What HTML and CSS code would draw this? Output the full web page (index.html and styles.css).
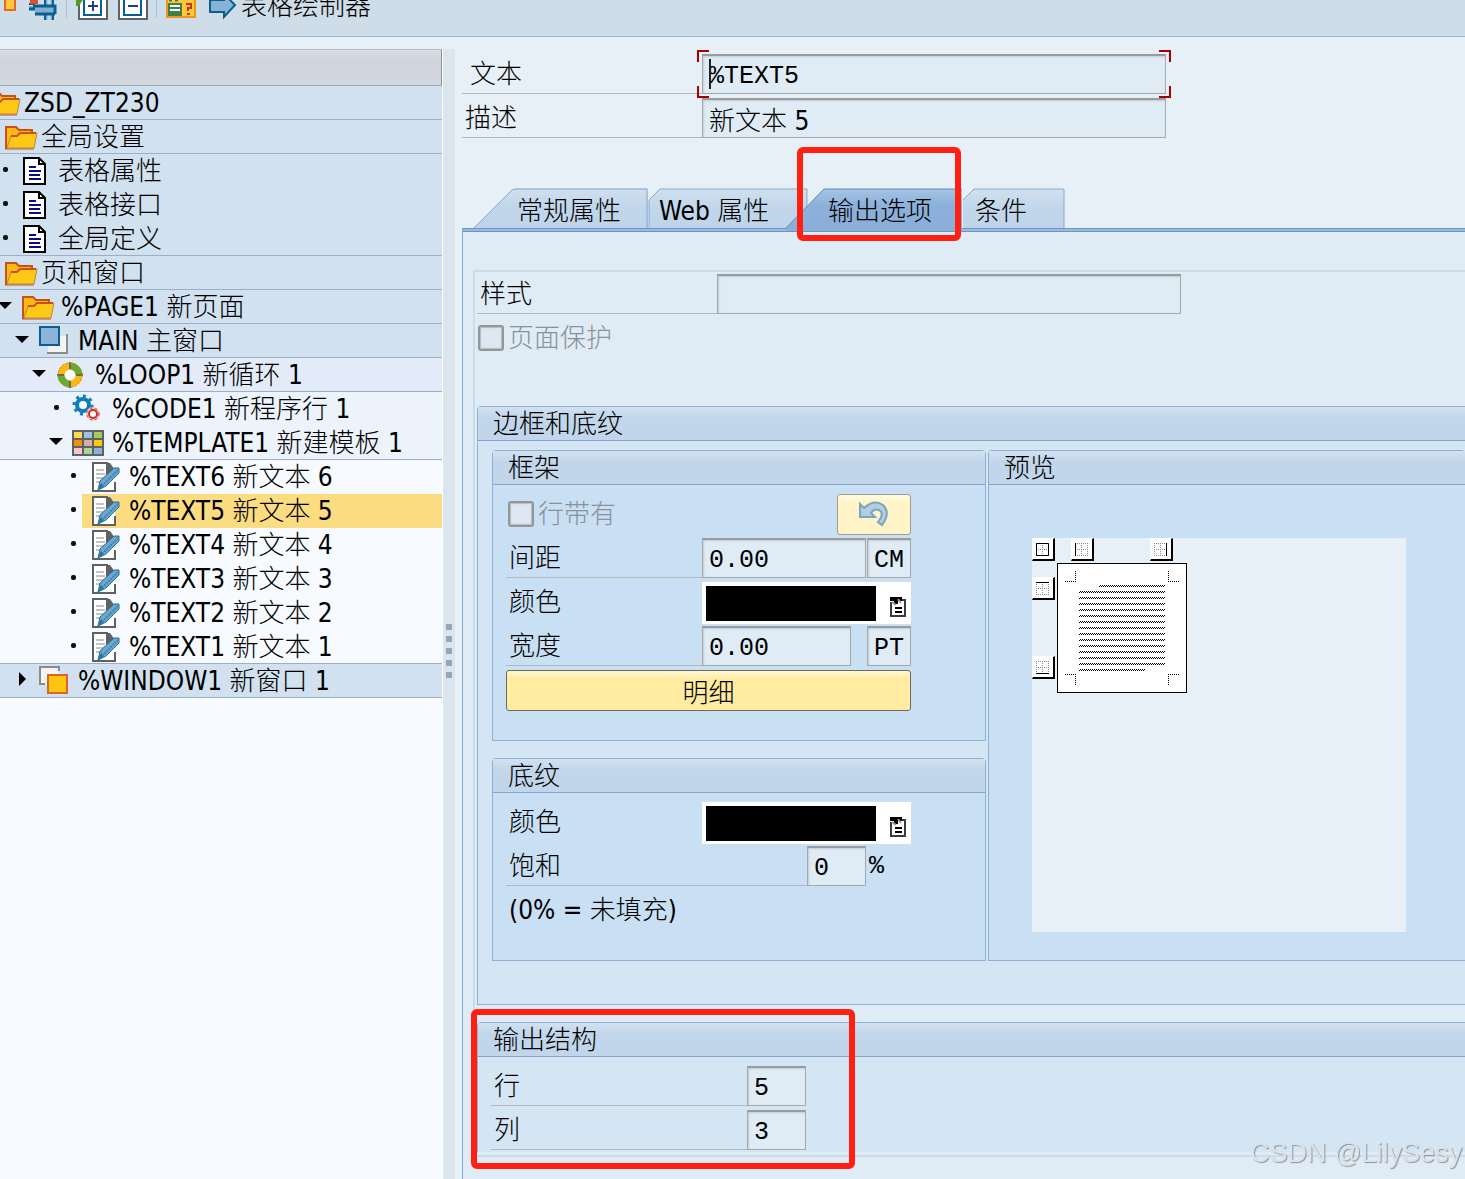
FILE: index.html
```html
<!DOCTYPE html>
<html lang="zh-CN">
<head>
	<meta charset="UTF-8">
	<title>表格绘制器</title>
	<link rel="stylesheet" href="styles.css">
</head>
<body>
	<!-- 图标 -->
	<svg class="defs" width="0" height="0">
		<symbol id="folder" viewBox="0 0 34 30">
			<path d="M2 27V5h10l3 3h13v5" fill="#fdb913" stroke="#c8501e" stroke-width="2"/>
			<path d="M3 26L7 14h6l3-3h17l-3 15z" fill="#fdc816" stroke="#b98a3a" stroke-width="1"/>
			<path d="M7 14h6l3-3h16" fill="none" stroke="#c8501e" stroke-width="2"/>
			<path d="M1 27h29" stroke="#c8501e" stroke-width="1"/>
		</symbol>
		<symbol id="doc" viewBox="0 0 34 30">
			<path d="M3 2h15l6 6v20H3z" fill="#fff" stroke="#000" stroke-width="2"/>
			<path d="M18 2v6h6" fill="none" stroke="#000" stroke-width="2"/>
			<path d="M8 11h7M8 15h12M8 19h11M8 23h12" stroke="#0a0a8c" stroke-width="2"/>
		</symbol>
		<symbol id="edit" viewBox="0 0 34 30">
			<path d="M4 1h14l8 8v20H4z" fill="#fff"/>
			<path d="M26 20v9H4V1h15" fill="none" stroke="#5f6163" stroke-width="2"/>
			<path d="M17 1h4l5 7-6 5h-3z" fill="#5f6163"/>
			<path d="M7 8h8M7 12h9M7 16h8M7 20h6" stroke="#c2c4c6" stroke-width="2"/>
			<path d="M9 28l2-9L25 6h5v5L17 24z" fill="#6fa6cc" stroke="#1f6f9f" stroke-width="1"/>
			<path d="M9 28l3-7 3 3z" fill="#1f6f9f"/>
			<path d="M13 24L29 8" stroke="#3d82b0" stroke-width="2" stroke-dasharray="2 1"/>
		</symbol>
		<symbol id="list" viewBox="0 0 18 22">
			<path d="M2 6v14h14V4h-3" fill="#fff" stroke="#3d3a3c" stroke-width="2"/>
			<path d="M1 1h12v4H9v3H5V5H1z" fill="#000"/>
			<path d="M9 3l3 4M3 6l4 3" stroke="#999" stroke-width="2"/>
			<path d="M6 12h7M6 16h7" stroke="#000" stroke-width="2"/>
		</symbol>
		<symbol id="cells" viewBox="0 0 13 13">
			<path d="M.5 0v13M6.500 0v13M12.500 0v13M0 .5h13M0 6.500h13M0 12.500h13" stroke="#888" stroke-dasharray="1 1" fill="none"/>
		</symbol>
	</svg>

	<div class="toolbar">
		<svg width="18" height="32"><path d="M5 9h10v11H5z" fill="#ffc83c" stroke="#e06a28" stroke-width="2"/></svg>
		<button type="button" class="tool" aria-label="检查">
			<svg width="32" height="32"><path d="M19 6h8v24h-8z" fill="#7fb0d0"/><path d="M23 10v20" stroke="#c0d8ea" stroke-width="3"/><path d="M19 24v6M27 6v24M19 6v9M9 14H3" fill="none" stroke="#0a5f90" stroke-width="2"/><path d="M3 16h26v8H9v-4H3z" fill="#7fb0d0"/><path d="M3 19h6M9 24h20M7 16h22v8" fill="none" stroke="#0a5f90" stroke-width="3"/><path d="M4 8h8v6H4z" fill="#d9502a"/></svg>
		</button>
		<i class="sep"></i>
		<button type="button" class="tool" aria-label="展开">
			<svg width="32" height="32"><path d="M3 2h28v27H3z" fill="#fff" stroke="#5f6163" stroke-width="2"/><path d="M8 6h17v19H8z" fill="#fff" stroke="#0a5f90" stroke-width="2"/><path d="M17 11v10M12 16h10" stroke="#1c3c8c" stroke-width="2"/><path d="M0 8h9l-3 3-3 5H0z" fill="#4f9a2c"/></svg>
		</button>
		<button type="button" class="tool" aria-label="折叠">
			<svg width="32" height="32"><path d="M3 2h28v27H3z" fill="#fff" stroke="#5f6163" stroke-width="2"/><path d="M8 6h17v19H8z" fill="#fff" stroke="#0a5f90" stroke-width="2"/><path d="M12 16h10" stroke="#1c3c8c" stroke-width="2"/></svg>
		</button>
		<i class="sep"></i>
		<button type="button" class="tool" aria-label="帮助">
			<svg width="32" height="32"><path d="M1 2h28v25H1z" fill="#ffc83c" stroke="#f0941e" stroke-width="2"/><path d="M2 13h14v13H2z" fill="#3f7f48"/><path d="M4 16h10M4 20h10" stroke="#fff" stroke-width="2"/><path d="M3 10h3M9 10h3" stroke="#3f7f48" stroke-width="3"/><path d="M20 14h5v4h-3v3M21 24h3" fill="none" stroke="#c03a20" stroke-width="2"/></svg>
		</button>
		<button type="button" class="tool">
			<svg width="32" height="32"><path d="M4 10h14V4l11 11-11 12v-5H4z" fill="#86b2d6" stroke="#0a5f90" stroke-width="2"/></svg>
			<span>表格绘制器</span>
		</button>
	</div>

	<div class="main">
		<div class="left">
			<div class="tree-head"></div>
			<ul class="tree">
				<li class="lv0 top line"><i class="toggle"></i><a href="#"><svg><use href="#folder"/></svg>ZSD_ZT230</a></li>
				<li class="lv1 top line"><i class="toggle"></i><a href="#"><svg><use href="#folder"/></svg>全局设置</a></li>
				<li class="lv2 top"><i class="toggle dot"></i><a href="#"><svg><use href="#doc"/></svg>表格属性</a></li>
				<li class="lv2 top"><i class="toggle dot"></i><a href="#"><svg><use href="#doc"/></svg>表格接口</a></li>
				<li class="lv2 top line"><i class="toggle dot"></i><a href="#"><svg><use href="#doc"/></svg>全局定义</a></li>
				<li class="lv1 top line"><i class="toggle"></i><a href="#"><svg><use href="#folder"/></svg>页和窗口</a></li>
				<li class="lv2 line"><i class="toggle open"></i><a href="#"><svg><use href="#folder"/></svg>%PAGE1 新页面</a></li>
				<li class="lv3 line"><i class="toggle open"></i><a href="#">
					<svg><path d="M10 10h19v17H10z" fill="#f4f4f4"/><path d="M29 8v19H9" fill="none" stroke="#8c8c8c" stroke-width="2"/><path d="M2 1h19v18H2z" fill="#8cb4d8" stroke="#0a5f90" stroke-width="2"/></svg>MAIN 主窗口</a></li>
				<li class="lv4 line"><i class="toggle open"></i><a href="#">
					<svg><g fill="none" stroke-width="7"><path d="M6 15a9 9 0 0 1 9-9" stroke="#fdb813"/><path d="M15 6a9 9 0 0 1 9 9" stroke="#6aaa2c"/><path d="M24 15a9 9 0 0 1-9 9" stroke="#fdb813"/><path d="M15 24a9 9 0 0 1-9-9" stroke="#6aaa2c"/></g><circle cx="15" cy="15" r="5" fill="#fff"/><path d="M15 2v7M15 21v7M2 15h7M21 15h7" stroke="#6a6a5a" stroke-width="2"/><circle cx="15" cy="15" r="12" fill="none" stroke="#c08a20" stroke-dasharray="2 2"/></svg>%LOOP1 新循环 1</a></li>
				<li class="lv5"><i class="toggle dot"></i><a href="#">
					<svg><circle cx="11" cy="11" r="6" fill="#fff" stroke="#0f7cc0" stroke-width="4"/><circle cx="11" cy="11" r="9" fill="none" stroke="#0f7cc0" stroke-width="3" stroke-dasharray="3 4"/><circle cx="21" cy="20" r="7" fill="#f4c8c4"/><circle cx="21" cy="20" r="4" fill="#fff" stroke="#c8302c" stroke-width="2"/><circle cx="21" cy="20" r="6" fill="none" stroke="#c8302c" stroke-width="1" stroke-dasharray="2 3"/></svg>%CODE1 新程序行 1</a></li>
				<li class="lv5 line"><i class="toggle open"></i><a href="#">
					<svg><path d="M0 2h32v26H0z" fill="#5f6163"/><path d="M2 4h8v6H2z" fill="#fdd850"/><path d="M12 4h8v6h-8z" fill="#a0c0e0"/><path d="M22 4h8v6h-8z" fill="#a0cc60"/><path d="M2 12h8v6H2z" fill="#f09010"/><path d="M12 12h8v6h-8z" fill="#d4b0a0"/><path d="M22 12h8v6h-8z" fill="#fdc810"/><path d="M2 20h8v6H2z" fill="#f8c4c8"/><path d="M12 20h8v6h-8z" fill="#a8d4a0"/><path d="M22 20h8v6h-8z" fill="#8cb0d8"/></svg>%TEMPLATE1 新建模板 1</a></li>
				<li class="lv6"><i class="toggle dot"></i><a href="#"><svg><use href="#edit"/></svg>%TEXT6 新文本 6</a></li>
				<li class="lv6"><i class="toggle dot"></i><a href="#" class="active"><svg><use href="#edit"/></svg>%TEXT5 新文本 5</a></li>
				<li class="lv6"><i class="toggle dot"></i><a href="#"><svg><use href="#edit"/></svg>%TEXT4 新文本 4</a></li>
				<li class="lv6"><i class="toggle dot"></i><a href="#"><svg><use href="#edit"/></svg>%TEXT3 新文本 3</a></li>
				<li class="lv6"><i class="toggle dot"></i><a href="#"><svg><use href="#edit"/></svg>%TEXT2 新文本 2</a></li>
				<li class="lv6 line"><i class="toggle dot"></i><a href="#"><svg><use href="#edit"/></svg>%TEXT1 新文本 1</a></li>
				<li class="lv3 line"><i class="toggle close"></i><a href="#">
					<svg><path d="M2 1h19v18H2z" fill="#f4f4f4"/><path d="M2 19V1h19v4M2 18h5" fill="none" stroke="#8c8c8c" stroke-width="2"/><path d="M10 9h19v18H10z" fill="#fdc510" stroke="#dc6428" stroke-width="2"/></svg>%WINDOW1 新窗口 1</a></li>
			</ul>
		</div>

		<div class="splitter"><i></i><i></i><i></i><i></i><i></i></div>

		<div class="right">
			<div class="row">
				<label class="name first" for="text">文本</label>
				<div class="focus">
					<input id="text" class="long mono" type="text" value="%TEXT5">
					<i class="caret"></i>
					<i class="corner tl"></i><i class="corner tr"></i><i class="corner bl"></i><i class="corner br"></i>
				</div>
			</div>
			<div class="row">
				<label class="name" for="desc">描述</label>
				<input id="desc" class="long" type="text" value="新文本 5">
			</div>

			<div class="tabs">
				<button type="button" class="tab tab1">
					<svg viewBox="0 0 174 40"><path d="M0 40L36 4q3-4 8-4h130v40z" fill="url(#tabBg)"/><path d="M0 40L36 4q2-3 6-3h131v39" fill="none" stroke="#86a9cc"/></svg>
					<span>常规属性</span>
				</button>
				<button type="button" class="tab tab2">
					<svg viewBox="0 0 160 40"><path d="M1 40V12L12 1h147v39z" fill="url(#tabBg)"/><path d="M1 40V12L12 1h147v39" fill="none" stroke="#86a9cc"/></svg>
					<span>Web 属性</span>
				</button>
				<button type="button" class="tab tab3">
					<svg viewBox="0 0 176 43"><path d="M0 43V40L38 1h138v42z" fill="url(#tabOn)"/><path d="M0 40L38 1h138" fill="none" stroke="#5f8cba"/></svg>
					<span>输出选项</span>
					<i class="mark"></i>
				</button>
				<button type="button" class="tab tab4">
					<svg viewBox="0 0 103 40"><path d="M1 40V12L12 1h90v39z" fill="url(#tabBg)"/><path d="M1 12L12 1h90v39" fill="none" stroke="#86a9cc"/></svg>
					<span>条件</span>
				</button>
				<svg class="defs" width="0" height="0">
					<linearGradient id="tabBg" x2="0" y2="1"><stop offset="0" stop-color="#d0e0ef"/><stop offset=".5" stop-color="#c0d6ea"/><stop offset="1" stop-color="#bfd4ea"/></linearGradient>
					<linearGradient id="tabOn" x2="0" y2="1"><stop offset="0" stop-color="#a4c4e4"/><stop offset=".4" stop-color="#8cb0da"/><stop offset="1" stop-color="#8aaed8"/></linearGradient>
				</svg>
			</div>

			<div class="panel">
				<div class="frame">
					<div class="row">
						<label class="name" for="style">样式</label>
						<input id="style" class="long" type="text">
					</div>
					<div class="row">
						<label class="check"><input type="checkbox" disabled>页面保护</label>
					</div>

					<div class="group border-group">
						<h3>边框和底纹</h3>
						<div class="cols">
							<div class="col">
								<div class="box">
									<h3>框架</h3>
									<div class="form">
										<div class="row between">
											<label class="check"><input type="checkbox" disabled>行带有</label>
											<button type="button" class="btn undo" aria-label="撤销">
												<svg width="32" height="28"><path d="M2 3l4 4q10-9 19-3 8 8-1 20l-4-3q7-9 1-12-5-2-8 3l4 4H2z" fill="#b4cde0" stroke="#78a6c2" stroke-width="2"/></svg>
											</button>
										</div>
										<div class="row">
											<label class="name" for="gap">间距</label>
											<input id="gap" class="num mono" type="text" value="0.00">
											<input class="unit mono" type="text" value="CM" aria-label="间距单位">
										</div>
										<div class="row">
											<span class="name plain">颜色</span>
											<button type="button" class="color" aria-label="框架颜色"><i></i><svg width="18" height="22"><use href="#list"/></svg></button>
										</div>
										<div class="row">
											<label class="name" for="width">宽度</label>
											<input id="width" class="num short mono" type="text" value="0.00">
											<input class="unit mono" type="text" value="PT" aria-label="宽度单位">
										</div>
										<button type="button" class="btn detail">明细</button>
									</div>
								</div>
								<div class="box">
									<h3>底纹</h3>
									<div class="form">
										<div class="row">
											<span class="name plain">颜色</span>
											<button type="button" class="color" aria-label="底纹颜色"><i></i><svg width="18" height="22"><use href="#list"/></svg></button>
										</div>
										<div class="row">
											<label class="name wide" for="sat">饱和</label>
											<input id="sat" class="tiny mono" type="text" value="0">
											<span class="percent mono">%</span>
										</div>
										<p class="tip">(0% = 未填充)</p>
									</div>
								</div>
							</div>
							<div class="box preview">
								<h3>预览</h3>
								<div class="canvas">
									<button type="button" class="edge all" aria-label="全部边框"><svg width="13" height="13"><use href="#cells"/><path d="M.5.5h12v12H.5z" fill="none" stroke="#000"/></svg></button>
									<button type="button" class="edge e-left" aria-label="左边框"><svg width="13" height="13"><use href="#cells"/><path d="M.5 0v13" stroke="#000"/></svg></button>
									<button type="button" class="edge e-right" aria-label="右边框"><svg width="13" height="13"><use href="#cells"/><path d="M12.500 0v13" stroke="#000"/></svg></button>
									<button type="button" class="edge e-top" aria-label="上边框"><svg width="13" height="13"><use href="#cells"/><path d="M0 .5h13" stroke="#000"/></svg></button>
									<button type="button" class="edge e-bottom" aria-label="下边框"><svg width="13" height="13"><use href="#cells"/><path d="M0 12.500h13" stroke="#000"/></svg></button>
									<svg class="page" width="130" height="130" shape-rendering="crispEdges">
										<pattern id="wave" width="2" height="2" patternUnits="userSpaceOnUse"><path d="M0 1h1v1H0zM1 0h1v1H1z"/></pattern>
										<path d="M.5.5h129v129H.5z" fill="#fff" stroke="#000"/>
										<path d="M8 18.500h11M18.500 8v11M111.500 8v11M111 18.500h11M8 111.500h11M18.500 111v11M111.500 111v11M111 111.500h11" fill="none" stroke="#000" stroke-dasharray="1 1"/>
										<path fill="url(#wave)" d="M42 22h66v2H42zM22 28h86v2H22zM22 34h86v2H22zM22 40h86v2H22zM22 46h86v2H22zM22 52h86v2H22zM22 58h86v2H22zM22 64h86v2H22zM22 70h86v2H22zM22 76h86v2H22zM22 82h86v2H22zM22 88h86v2H22zM22 94h86v2H22zM22 100h86v2H22zM22 106h66v2H22z"/>
									</svg>
								</div>
							</div>
						</div>
					</div>

					<div class="group output">
						<h3>输出结构</h3>
						<div class="form">
							<div class="row">
								<label class="name" for="line">行</label>
								<input id="line" class="tiny mono" type="text" value="5">
							</div>
							<div class="row">
								<label class="name" for="column">列</label>
								<input id="column" class="tiny mono" type="text" value="3">
							</div>
						</div>
						<i class="mark"></i>
					</div>
				</div>
			</div>
		</div>
	</div>
	<div class="watermark">CSDN @LilySesy</div>
</body>
</html>
```
FILE: styles.css
```css
*{margin: 0;padding: 0;box-sizing: border-box;}
body{
	display: flex;
	flex-direction: column;
	min-height: 100vh;
	overflow: hidden;
	background-color: #e8f0f7;
	font-size: 26px;
	font-weight: 300;
	line-height: 34px;
	color: #000;
}
body, button, input{
	font-family: "DejaVu Sans Condensed", "Noto Sans CJK SC", sans-serif;
}
button, input{
	font-size: 26px;
	font-weight: 300;
	color: #000;
}
button{
	border: none;
	background: none;
	cursor: pointer;
}
li{
	list-style: none;
}
svg{
	display: block;
	flex: none;
}
.defs{
	position: absolute;
}
.mono{
	font-family: "Liberation Mono", "Noto Sans CJK SC", monospace;
	font-size: 25px;
}
/* 工具栏 */
.toolbar{
	display: flex;
	align-items: center;
	gap: 8px;
	height: 61px;
	margin-top: -24px;
	background-color: #cfdde8;
	border-bottom: 1px solid #a3b8cf;
}
.toolbar .tool{
	display: flex;
	align-items: center;
	gap: 3px;
	line-height: 34px;
}
.toolbar .sep{
	width: 1px;
	height: 24px;
	margin: 0 1px 0 0;
	background-color: #a9c0da;
}
.main{
	display: flex;
	flex: 1;
	padding-top: 12px;
}
/* 左侧树 */
.left{
	flex: none;
	width: 443px;
	overflow: hidden;
	background-color: #f7faff;
	border-right: 1px solid #fff;
}
.tree-head{
	height: 37px;
	border: 1px solid #9aabb9;
	border-color: #b4bec8 #8e9092 #9aabb9;
	border-left: none;
	background: linear-gradient(#dadfe2, #d0d4de 30%, #d0d4de 80%, #d6dcde);
}
.tree{
	margin-left: -40px;
}
.tree li{
	display: flex;
	height: 34px;
	background-color: #d2e1ef;
}
.tree .line{
	border-bottom: 1px solid #9bb0c8;
}
.tree .lv0{padding-left: 2px;}
.tree .lv1{padding-left: 19px;}
.tree .lv2{padding-left: 36px;}
.tree .lv3{padding-left: 53px;}
.tree .lv4{padding-left: 70px;background-color: #e2ebf7;}
.tree .lv5{padding-left: 87px;background-color: #ecf3fb;}
.tree .lv6{padding-left: 104px;background-color: #f7faff;}
.tree a{
	display: flex;
	flex: 1;
	align-items: center;
	gap: 6px;
	padding-left: 7px;
	line-height: 34px;
	color: #000;
	text-decoration: none;
	white-space: nowrap;
}
.tree .top a{
	gap: 3px;
}
.tree a.active{
	background-color: #fcdc80;
}
.tree a svg{
	width: 34px;
	height: 30px;
}
.toggle{
	display: flex;
	flex: none;
	align-items: center;
	justify-content: center;
	width: 18px;
	height: 30px;
}
.toggle:before{
	border: 7px solid transparent;
}
.dot:before{
	content: "";
	width: 5px;
	height: 5px;
	border: none;
	border-radius: 2px;
	background-color: #111;
}
.open:before{
	content: "";
	border-top-color: #000;
	border-bottom: none;
}
.close:before{
	content: "";
	border-left-color: #000;
	border-right: none;
}
.splitter{
	display: flex;
	flex: none;
	flex-direction: column;
	align-items: center;
	justify-content: center;
	gap: 6px;
	width: 12px;
	padding-top: 74px;
	background-color: #dbe6ec;
}
.splitter i{
	width: 6px;
	height: 6px;
	background-color: #98a5b8;
}
/* 右侧表单 */
.right{
	display: flex;
	flex: 1;
	flex-direction: column;
	min-width: 0;
	padding: 5px 0 0 7px;
}
.row{
	display: flex;
	height: 40px;
	margin-bottom: 4px;
}
.name{
	flex: none;
	width: 240px;
	padding-left: 3px;
	line-height: 41px;
	border-bottom: 1px solid #b2b8bc;
}
.first{
	padding-left: 8px;
}
.plain{
	border-bottom: none;
}
.row input[type=text]{
	height: 40px;
	padding: 0 6px;
	border: 1px solid #a5a9ab;
	border-top: 2px solid #999c9e;
	border-radius: 0;
	background-color: #dfebf5;
	box-shadow: inset 1px 1px 2px #c4ccd2;
	outline: none;
}
.row input.mono{
	padding-top: 3px;
}
.row input.long{
	width: 464px;
}
.focus{
	position: relative;
}
.caret{
	position: absolute;
	left: 7px;
	top: 5px;
	width: 2px;
	height: 30px;
	background-color: #222;
}
.corner{
	position: absolute;
	width: 12px;
	height: 12px;
	border: 0 solid #a80000;
}
.tl{left: -5px;top: -4px;border-width: 2px 0 0 2px;}
.tr{right: -5px;top: -4px;border-width: 2px 2px 0 0;}
.bl{left: -5px;bottom: -4px;border-width: 0 0 2px 2px;}
.br{right: -5px;bottom: -4px;border-width: 0 2px 2px 0;}
/* 页签 */
.tabs{
	display: flex;
	height: 40px;
	margin-top: 46px;
	padding-left: 12px;
}
.tab{
	position: relative;
	height: 40px;
	text-align: left;
	line-height: 40px;
	padding-top: 3px;
}
.tab svg{
	position: absolute;
	left: 0;
	top: 0;
	width: 100%;
}
.tab span{
	position: relative;
}
.tab1{width: 174px;padding-left: 43px;}
.tab2{width: 160px;padding-left: 11px;}
.tab3{z-index: 1;width: 176px;margin-left: -22px;padding-left: 42px;}
.tab4{width: 103px;padding-left: 13px;}
.mark{
	position: absolute;
	border: 6px solid #ff2012;
	border-radius: 6px;
	pointer-events: none;
}
.tab3 .mark{
	left: 11px;
	top: -41px;
	width: 164px;
	height: 94px;
}
.panel{
	flex: 1;
	padding: 42px 0 0 10px;
	border-left: 1px solid #86a9cc;
	background-color: #dfebf5;
	box-shadow: inset 0 1px #6b94be, inset 0 3px #9cbcdc, inset 0 4px #6b94be;
}
.frame{
	padding: 2px 0 3px 2px;
	border: 2px solid #cbdbe9;
	border-right: none;
}
.check{
	display: flex;
	align-items: center;
	gap: 4px;
	padding-left: 1px;
	color: #8a9199;
}
.box .check{
	padding-left: 2px;
}
.check input{
	appearance: none;
	width: 26px;
	height: 26px;
	border: 2px solid #929799;
	border-radius: 3px;
	background-color: #dde8f3;
	box-shadow: inset 0 0 1px 1px #b4babe;
}
.group{
	border: 1px solid #8fb0d2;
	border-right: none;
	border-radius: 4px 0 0 0;
	background-color: #d4e5f4;
}
.border-group{
	margin-top: 48px;
}
h3{
	height: 34px;
	padding-left: 15px;
	border-bottom: 1px solid #86a4c8;
	font-size: 26px;
	font-weight: 300;
	line-height: 34px;
	background: linear-gradient(#d2e1f0, #c1d6ea 35%);
}
.cols{
	display: flex;
	gap: 2px;
	padding: 9px 0 43px 14px;
}
.col{
	display: flex;
	flex: none;
	flex-direction: column;
	gap: 17px;
	width: 494px;
}
.box{
	border: 1px solid #8fb0d2;
	border-radius: 4px 4px 0 0;
	background-color: #c8dff4;
}
.box .form{
	width: 418px;
	padding: 9px 0 29px 13px;
}
.box .name{
	width: 196px;
}
.box .wide{
	width: 301px;
}
.between{
	justify-content: space-between;
}
.btn{
	display: block;
	height: 41px;
	border: 1px solid #6e6a5a;
	border-radius: 3px;
	background: linear-gradient(#fff8d8, #ffeca0 20%, #ffeca0);
}
.undo{
	width: 74px;
	padding-left: 20px;
	border-color: #a09c90;
	background: linear-gradient(#fffbe4, #fff4c8 20%, #fff4c8);
}
.detail{
	width: 100%;
}
.row .num{
	width: 164px;
}
.row .short{
	width: 149px;
}
.row .unit{
	width: 44px;
	margin-left: auto;
}
.row .tiny{
	width: 59px;
}
.color{
	display: flex;
	flex: 1;
	align-items: center;
	justify-content: space-between;
	height: 42px;
	padding: 0 4px;
	background-color: #fff;
}
.color i{
	width: 170px;
	height: 35px;
	background-color: #000;
}
.color svg{
	margin-top: 8px;
}
.percent{
	padding-left: 3px;
	line-height: 42px;
}
.tip{
	height: 41px;
	padding-left: 3px;
	line-height: 41px;
}
/* 预览 */
.preview{
	flex: 1;
	border-right: none;
}
.canvas{
	position: relative;
	width: 374px;
	height: 394px;
	margin: 53px 0 0 43px;
	background-color: #e8f0f7;
}
.edge{
	position: absolute;
	width: 23px;
	height: 23px;
	padding: 3px;
	border: 1px solid #fff;
	border-right: 2px solid #000;
	border-bottom: 2px solid #000;
	background-color: #fff;
}
.all{left: 0;top: 0;}
.e-left{left: 39px;top: 0;}
.e-right{left: 118px;top: 0;}
.e-top{left: 0;top: 39px;}
.e-bottom{left: 0;top: 118px;}
.page{
	position: absolute;
	left: 25px;
	top: 25px;
}
/* 输出结构 */
.output{
	position: relative;
	margin-top: 17px;
	border-bottom: none;
}
.output .form{
	padding: 9px 0 2px 13px;
}
.output .row:last-child{
	margin-bottom: 0;
}
.output .name{
	width: 256px;
}
.output .mark{
	left: -7px;
	top: -14px;
	width: 384px;
	height: 160px;
}
.watermark{
	position: fixed;
	right: 3px;
	bottom: 9px;
	font: 27px/34px "Liberation Sans", sans-serif;
	color: #dde3e8;
	text-shadow: 1px 1px 1px #8d959c;
}
```
